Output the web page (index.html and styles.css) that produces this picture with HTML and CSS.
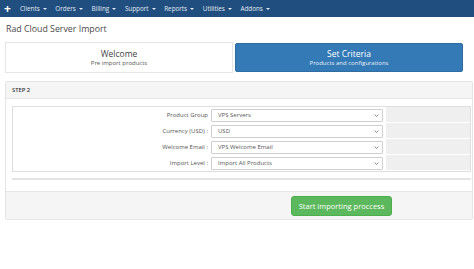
FILE: index.html
```html
<!DOCTYPE html>
<html lang="en">
<head>
  <meta charset="UTF-8" />
  <title>Rad Cloud Server Import</title>
  <link rel="stylesheet" href="styles.css">
</head>
<body>

<div class="navbar">
  <span class="plus">+</span>
  <span class="nav-item">Clients <i class="caret"></i></span>
  <span class="nav-item">Orders <i class="caret"></i></span>
  <span class="nav-item">Billing <i class="caret"></i></span>
  <span class="nav-item">Support <i class="caret"></i></span>
  <span class="nav-item">Reports <i class="caret"></i></span>
  <span class="nav-item">Utilities <i class="caret"></i></span>
  <span class="nav-item">Addons <i class="caret"></i></span>
</div>

<h1 class="title">Rad Cloud Server Import</h1>

<div class="tabs">
  <div class="tab">
    <div class="tab-title">Welcome</div>
    <div class="tab-sub">Pre import products</div>
  </div>
  <div class="tab active">
    <div class="tab-title">Set Criteria</div>
    <div class="tab-sub">Products and configurations</div>
  </div>
</div>

<div class="panel">
  <div class="panel-head">STEP 2</div>
  <div class="panel-body">
    <div class="form-box">
      <div class="form-row">
        <label>Product Group</label>
        <div class="select-wrap">
          <select><option>VPS Servers</option></select>
          <svg class="chev" viewBox="0 0 8 5"><path d="M1 1l3 3 3-3" fill="none" stroke="#555" stroke-width="1.2"/></svg>
        </div>
        <div class="fill"></div>
      </div>
      <div class="form-row">
        <label>Currency (USD) :</label>
        <div class="select-wrap">
          <select><option>USD</option></select>
          <svg class="chev" viewBox="0 0 8 5"><path d="M1 1l3 3 3-3" fill="none" stroke="#555" stroke-width="1.2"/></svg>
        </div>
        <div class="fill"></div>
      </div>
      <div class="form-row">
        <label>Welcome Email :</label>
        <div class="select-wrap">
          <select><option>VPS Welcome Email</option></select>
          <svg class="chev" viewBox="0 0 8 5"><path d="M1 1l3 3 3-3" fill="none" stroke="#555" stroke-width="1.2"/></svg>
        </div>
        <div class="fill"></div>
      </div>
      <div class="form-row">
        <label>Import Level :</label>
        <div class="select-wrap">
          <select><option>Import All Products</option></select>
          <svg class="chev" viewBox="0 0 8 5"><path d="M1 1l3 3 3-3" fill="none" stroke="#555" stroke-width="1.2"/></svg>
        </div>
        <div class="fill"></div>
      </div>
    </div>
    <div class="divider"></div>
  </div>
  <div class="panel-foot">
    <button class="start-btn">Start importing proccess</button>
  </div>
</div>

</body>
</html>
```

FILE: styles.css
```css
body {
  margin: 0;
  font-family: "Open Sans", "Liberation Sans", sans-serif;
  background: white;
  color: #444;
}
.navbar {
  height: 17px;
  background: #1f4e7f;
  display: flex;
  align-items: center;
  padding-left: 4px;
  color: #e3eaf3;
  font-size: 6.3px;
  font-weight: 400;
}
.plus {
  font-size: 12px;
  font-weight: 700;
  color: white;
  margin-right: 9px;
  line-height: 1;
}
.nav-item {
  margin-right: 8.7px;
  display: flex;
  align-items: center;
}
.caret {
  display: inline-block;
  margin-left: 3px;
  border-left: 2px solid transparent;
  border-right: 2px solid transparent;
  border-top: 2px solid #e3eaf3;
}
.title {
  margin: 0;
  padding: 6px 6px 0;
  height: 19px;
  font-size: 8.8px;
  font-weight: 400;
  color: #4a4a4a;
  line-height: 12px;
}
.tabs {
  display: flex;
  gap: 2px;
  margin: 0 11px 0 5px;
}
.tab {
  flex: 1;
  height: 29px;
  border: 1px solid #e6e6e6;
  background: white;
  display: flex;
  flex-direction: column;
  align-items: center;
  justify-content: center;
  text-align: center;
}
.tab.active {
  height: 27px;
  margin-top: 1px;
  background: #337ab7;
  border-color: #2e6da4;
  border-radius: 2px;
  color: white;
}
.tab-title {
  font-size: 8.5px;
  line-height: 11px;
}
.tab-sub {
  font-size: 6px;
  line-height: 9px;
  color: #555;
}
.tab.active .tab-sub {
  color: #eaf1f8;
}
.panel {
  margin: 8px 1px 0 5px;
  border: 1px solid #e4e4e4;
  border-radius: 2px;
}
.panel-head {
  height: 16px;
  background: #f5f5f5;
  border-bottom: 1px solid #e6e6e6;
  font-size: 5.8px;
  font-weight: 600;
  color: #333;
  padding-left: 6px;
  display: flex;
  align-items: center;
}
.panel-body {
  padding: 7px 1px 11px 6px;
}
.form-box {
  border: 1px solid #dedede;
}
.form-row {
  display: grid;
  grid-template-columns: 195px 172px 1fr;
  column-gap: 3px;
  height: 16px;
  align-items: center;
}
.form-row label {
  text-align: right;
  font-size: 6px;
  color: #555;
}
.select-wrap {
  position: relative;
  height: 13px;
}
.select-wrap select {
  display: block;
  box-sizing: border-box;
  appearance: none;
  -webkit-appearance: none;
  width: 100%;
  height: 13px;
  margin: 0;
  padding: 0 0 0 6px;
  border: 1px solid #cfcfcf;
  border-radius: 1px;
  background: white;
  font-family: inherit;
  font-size: 6px;
  line-height: 11px;
  color: #555;
}
.chev {
  position: absolute;
  right: 4px;
  top: 5px;
  width: 5px;
  height: 3px;
}
.fill {
  height: 16px;
  background: #efefef;
  border-bottom: 1px solid white;
  box-sizing: border-box;
}
.divider {
  height: 2px;
  margin-top: 6px;
  background: #e4e4e4;
}
.panel-foot {
  height: 27px;
  background: #f5f5f5;
  border-top: 1px solid #e6e6e6;
  display: flex;
  align-items: center;
  padding-left: 285px;
}
.start-btn {
  width: 101px;
  height: 20px;
  background: #5cb85c;
  border: 1px solid #4cae4c;
  border-radius: 3px;
  color: white;
  font-family: inherit;
  font-size: 7.5px;
  padding: 0;
}
```
